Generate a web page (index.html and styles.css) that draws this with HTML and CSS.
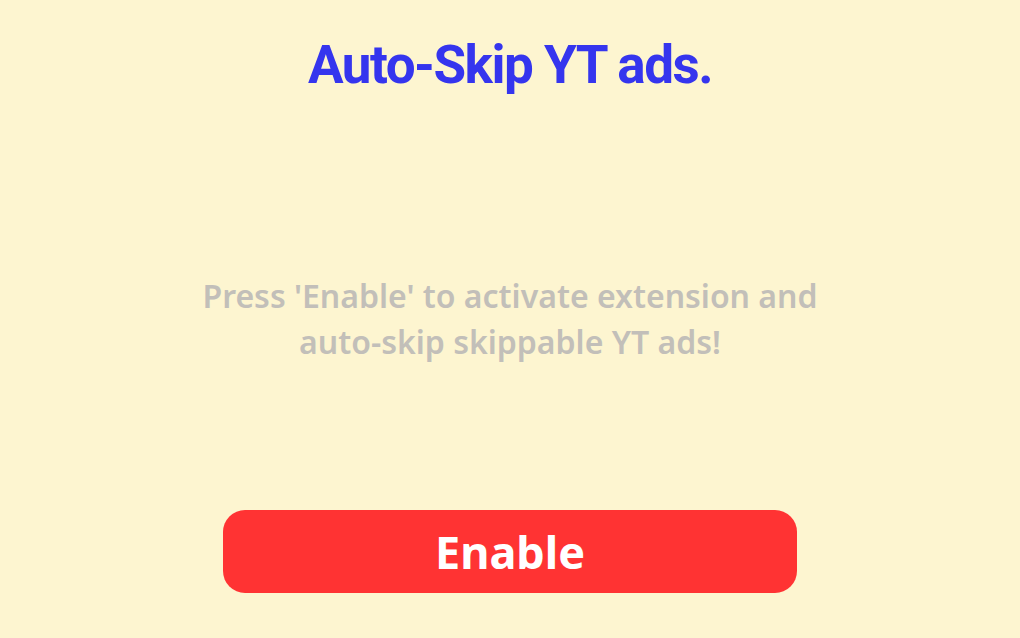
FILE: index.html
```html
<!DOCTYPE html>
<html>
<head>
	<meta charset="utf-8">
	<title>Auto-Skip YT ads</title>
	<link rel="stylesheet" href="styles.css">
</head>

<body>

	<div class="popup">
		<h1 class="title">Auto-Skip YT ads.</h1>
		<p class="hint">Press 'Enable' to activate extension and<br>auto-skip skippable YT ads!</p>
		<button class="enable">Enable</button>
	</div>

</body>
</html>
```

FILE: styles.css
```css
* {
	padding: 0;
	margin: 0;
}
html, body {
	height: 100%;
	background-color: #fdf5d0;
}
.popup {
	display: flex;
	flex-direction: column;
	align-items: center;
	height: 638px;
	font-family: "Noto Sans", "Open Sans", sans-serif;
	font-weight: 700;
}
.title {
	margin-top: 33px;
	font-family: Roboto, sans-serif;
	font-size: 53px;
	line-height: 64px;
	letter-spacing: -1.5px;
	color: #3535ee;
}
.hint {
	margin-top: 176px;
	font-size: 32px;
	line-height: 46px;
	font-weight: 600;
	text-align: center;
	color: #c2bfb9;
}
.enable {
	margin-top: 145px;
	width: 574px;
	height: 83px;
	border: none;
	border-radius: 22px;
	background-color: #ff3333;
	color: #fff;
	font-family: inherit;
	font-weight: 700;
	font-size: 45px;
}
```
